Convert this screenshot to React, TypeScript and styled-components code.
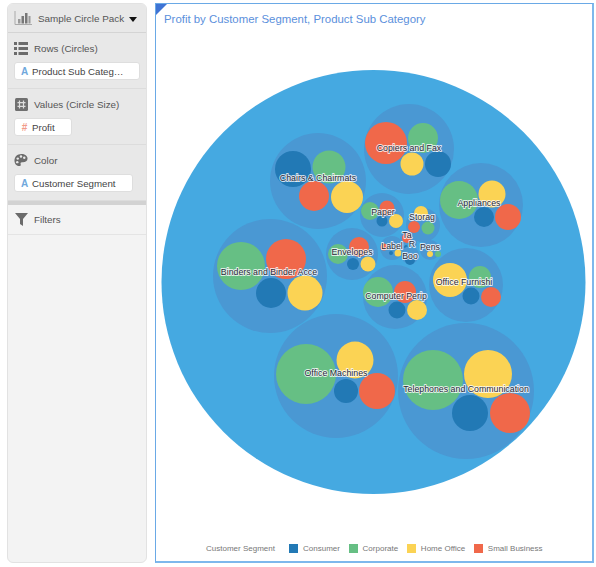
import React from "react";
import styled, { createGlobalStyle } from "styled-components";

const Global = createGlobalStyle`
  html, body { margin: 0; padding: 0; background: #fff; }
  body { font-family: "Liberation Sans", Arial, sans-serif; }
`;

const C = { dark: "#2279b5", green: "#66bf84", yellow: "#fbd354", red: "#f0684a" };

type Dot = [number, number, number, string];
type Group = { x: number; y: number; r: number; label: string; lx?: number; ly?: number; dots: Dot[] };

const groups: Group[] = [
  { x: 318, y: 181, r: 48, label: "Chairs & Chairmats", lx: 318, ly: 178, dots: [[293, 169, 18, C.dark], [329, 167, 16.5, C.green], [314, 196, 15, C.red], [347, 197, 16, C.yellow]] },
  { x: 409, y: 149, r: 45, label: "Copiers and Fax", lx: 409, ly: 148, dots: [[386, 143, 21, C.red], [423, 138, 15, C.green], [412, 164, 11.5, C.yellow], [438, 164, 13, C.dark]] },
  { x: 481, y: 205, r: 42, label: "Appliances", lx: 479, ly: 203, dots: [[459, 200, 19, C.green], [492, 194, 13.5, C.yellow], [484, 217, 10, C.dark], [508, 217, 13, C.red]] },
  { x: 382, y: 215, r: 22, label: "Paper", lx: 383, ly: 212, dots: [[370, 211, 9, C.green], [387, 208, 7.5, C.red], [382, 221, 5.5, C.dark], [396, 221, 7, C.yellow]] },
  { x: 423, y: 225, r: 17, label: "Storag", lx: 422, ly: 217, dots: [[421, 213, 7, C.yellow], [414, 227, 6, C.red], [428, 228, 6.5, C.green]] },
  { x: 352, y: 254, r: 26, label: "Envelopes", lx: 352, ly: 252, dots: [[338, 254, 10, C.green], [359, 247, 10, C.red], [353, 264, 6, C.dark], [368, 264, 7.5, C.yellow]] },
  { x: 407, y: 238, r: 7, label: "Ta", lx: 407, ly: 235, dots: [[407, 238, 5, C.red]] },
  { x: 392, y: 248, r: 12, label: "Label", lx: 392, ly: 246, dots: [[384, 247, 3.5, C.red], [391, 253, 2, C.dark], [398, 253, 3.5, C.yellow]] },
  { x: 413, y: 243, r: 4, label: "R", lx: 412, ly: 244, dots: [[406, 247, 2, C.dark]] },
  { x: 410, y: 255, r: 9, label: "Boo", lx: 410, ly: 256, dots: [[410, 260, 5, C.dark]] },
  { x: 430, y: 250, r: 10, label: "Pens", lx: 430, ly: 247, dots: [[430, 254, 3, C.yellow], [438, 254, 3, C.green]] },
  { x: 395, y: 297, r: 32, label: "Computer Perip", lx: 396, ly: 296, dots: [[378, 292, 15, C.green], [405, 292, 11, C.red], [397, 310, 8.5, C.dark], [417, 310, 10, C.yellow]] },
  { x: 466, y: 285, r: 37, label: "Office Furnishi", lx: 464, ly: 282, dots: [[450, 280, 17, C.yellow], [480, 277, 11, C.green], [471, 296, 8.5, C.dark], [491, 297, 10, C.red]] },
  { x: 270, y: 276, r: 57, label: "Binders and Binder Acce", lx: 269, ly: 272, dots: [[241, 266, 24, C.green], [286, 259, 20, C.red], [271, 293, 15, C.dark], [305, 293, 17.5, C.yellow]] },
  { x: 336, y: 376, r: 62, label: "Office Machines", lx: 336, ly: 373, dots: [[306, 374, 30, C.green], [355, 360, 18.5, C.yellow], [346, 391, 12, C.dark], [377, 391, 18, C.red]] },
  { x: 466, y: 391, r: 68, label: "Telephones and Communication", lx: 466, ly: 389, dots: [[433, 380, 30, C.green], [488, 374, 24, C.yellow], [470, 413, 18, C.dark], [510, 413, 20, C.red]] },
];

const Page = styled.div`
  width: 596px; height: 567px; box-sizing: border-box; padding: 3px 2px 4px 7px;
  display: flex; gap: 8px; overflow: hidden;
`;
const Side = styled.aside`
  width: 140px; flex: none; background: #f3f3f3; border: 1px solid #e2e2e2; border-radius: 6px;
  box-sizing: border-box; display: flex; flex-direction: column; overflow: hidden;
`;
const Header = styled.div`
  height: 29px; flex: none; box-sizing: border-box; background: #e8e8e8; border-bottom: 1px solid #d4d4d4;
  display: flex; align-items: center; padding-left: 6px; gap: 5px;
  font-size: 9.9px; color: #555;
`;
const Caret = styled.span`
  width: 0; height: 0; margin-top: 2px;
  border-left: 4px solid transparent; border-right: 4px solid transparent; border-top: 5px solid #111;
`;
const Section = styled.section`
  height: 56px; flex: none; box-sizing: border-box; background: #e8e8e8;
  border-bottom: 1px solid #dcdcdc; padding: 7px 6px 0 6px;
`;
const SectionTitle = styled.div`
  display: flex; align-items: center; gap: 6px; height: 16px; font-size: 9.8px; color: #555;
`;
const IconBox = styled.span`
  width: 14px; height: 14px; display: flex; align-items: center; justify-content: center; flex: none;
`;
const Pill = styled.div<{ $w: number }>`
  width: ${p => p.$w}px; height: 18px; box-sizing: border-box; margin-top: 6px;
  background: #fff; border: 1px solid #dedede; border-radius: 3px;
  display: flex; align-items: center; gap: 3px; padding-left: 5px;
  font-size: 9.7px; color: #444; white-space: nowrap;
`;
const TypeMark = styled.span<{ $c: string }>`
  color: ${p => p.$c}; font-weight: bold; font-size: 10px; width: 9px; text-align: center;
`;
const Divider = styled.div`
  height: 4px; flex: none; background: #d2d2d2;
`;
const Filters = styled.div`
  height: 30px; flex: none; box-sizing: border-box; border-bottom: 1px solid #e4e4e4;
  display: flex; align-items: center; gap: 6px; padding-left: 6px; font-size: 9.8px; color: #555;
`;
const Panel = styled.main`
  flex: 1; min-width: 0; position: relative; box-sizing: border-box;
  border-style: solid; border-width: 1px 2px 2px 1px;
  border-color: #6aa9e6 #7db8ec #7db8ec #6aa9e6;
  display: flex; flex-direction: column;
`;
const Corner = styled.span`
  position: absolute; left: 0; top: 0; width: 0; height: 0;
  border-top: 11px solid #3f74d4; border-right: 11px solid transparent;
`;
const Title = styled.h1`
  margin: 0; padding: 8px 0 0 8px; height: 22px; box-sizing: border-box;
  font-size: 11.4px; line-height: 14px; font-weight: normal; color: #5b90dc; flex: none;
`;
const Chart = styled.svg`
  display: block; flex: 1; min-height: 0; width: 100%;
`;
const Label = styled.text`
  font-family: "Liberation Sans", Arial, sans-serif; font-size: 8.8px; fill: #2a2a3a;
  stroke: #fff; stroke-opacity: .8; stroke-width: 1.8px; paint-order: stroke; stroke-linejoin: round; text-anchor: middle;
`;
const Legend = styled.div`
  height: 26px; flex: none; display: flex; align-items: center; padding: 0 0 0 50px; box-sizing: border-box;
  font-size: 8px; color: #777;
`;
const LegendTitle = styled.span`
  width: 83px; flex: none;
`;
const LegendItem = styled.span`
  display: flex; align-items: center; gap: 5px; margin-right: 8.7px; white-space: nowrap;
`;
const Swatch = styled.span<{ $c: string }>`
  width: 9px; height: 9px; background: ${p => p.$c}; flex: none;
`;

const BarsIcon = () => (
  <svg width="19" height="16" viewBox="0 0 19 16">
    <path d="M1 1v13.500h17" fill="none" stroke="#aaa" />
    <rect x="4" y="9" width="2.500" height="4.500" fill="#9a9a9a" />
    <rect x="7.500" y="6" width="2.500" height="7.500" fill="#777" />
    <rect x="11" y="3" width="2.500" height="10.500" fill="#777" />
    <rect x="14.500" y="6" width="2" height="7.500" fill="#9a9a9a" />
  </svg>
);
const ListIcon = () => (
  <svg width="14" height="13" viewBox="0 0 14 13" fill="#6b6b6b">
    <rect x="0" y="0" width="3" height="3" /><rect x="4.500" y="0" width="9.500" height="3" />
    <rect x="0" y="5" width="3" height="3" /><rect x="4.500" y="5" width="9.500" height="3" />
    <rect x="0" y="10" width="3" height="3" /><rect x="4.500" y="10" width="9.500" height="3" />
  </svg>
);
const HashIcon = () => (
  <svg width="13" height="13" viewBox="0 0 13 13">
    <rect width="13" height="13" rx="1.500" fill="#6f6f6f" />
    <path d="M4.500 2.500v8M8.500 2.500v8M2.500 4.700h8M2.500 8.300h8" stroke="#ddd" strokeWidth="1.200" />
  </svg>
);
const PaletteIcon = () => (
  <svg width="15" height="14" viewBox="0 0 15 14">
    <path d="M8 .5C3.500.5 .5 3.500.5 7.500s2.700 6 5 6c1.800 0 2-1.300 1.600-2.300-.4-1.200.3-2 1.600-1.900 3 .3 5.800-.9 5.800-4C14.500 2.500 11.500.5 8 .5z" fill="#6b6b6b" />
    <circle cx="4" cy="5.500" r="1.300" fill="#e8e8e8" />
    <circle cx="7.500" cy="3.300" r="1.300" fill="#e8e8e8" />
    <circle cx="11" cy="4.500" r="1.300" fill="#e8e8e8" />
    <circle cx="3.500" cy="9.300" r="1.300" fill="#e8e8e8" />
  </svg>
);
const FunnelIcon = () => (
  <svg width="13" height="13" viewBox="0 0 13 13">
    <path d="M0 0h13L8 6v7L5 11V6z" fill="#6b6b6b" />
  </svg>
);

export default function App() {
  return (
    <Page>
      <Global />
      <Side>
        <Header>
          <BarsIcon />
          <span>Sample Circle Pack</span>
          <Caret />
        </Header>
        <Section>
          <SectionTitle><IconBox><ListIcon /></IconBox>Rows (Circles)</SectionTitle>
          <Pill $w={126}><TypeMark $c="#6fa8dc">A</TypeMark>Product Sub Categ…</Pill>
        </Section>
        <Section>
          <SectionTitle><IconBox><HashIcon /></IconBox>Values (Circle Size)</SectionTitle>
          <Pill $w={58}><TypeMark $c="#f29b8a">#</TypeMark>Profit</Pill>
        </Section>
        <Section>
          <SectionTitle><IconBox><PaletteIcon /></IconBox>Color</SectionTitle>
          <Pill $w={119}><TypeMark $c="#6fa8dc">A</TypeMark>Customer Segment</Pill>
        </Section>
        <Divider />
        <Filters><IconBox><FunnelIcon /></IconBox>Filters</Filters>
      </Side>
      <Panel>
        <Corner />
        <Title>Profit by Customer Segment, Product Sub Category</Title>
        <Chart viewBox="156 26 436 509" preserveAspectRatio="xMinYMin meet">
          <circle cx={373.5} cy={282} r={212} fill="#45a9e1" />
          {groups.map(g => (
            <g key={g.label}>
              <circle cx={g.x} cy={g.y} r={g.r} fill="#4a98d3" />
              {g.dots.map((d, i) => <circle key={i} cx={d[0]} cy={d[1]} r={d[2]} fill={d[3]} />)}
            </g>
          ))}
          {groups.map(g => (
            <Label key={g.label} x={g.lx ?? g.x} y={(g.ly ?? g.y) + 3}>{g.label}</Label>
          ))}
        </Chart>
        <Legend>
          <LegendTitle>Customer Segment</LegendTitle>
          <LegendItem><Swatch $c={C.dark} />Consumer</LegendItem>
          <LegendItem><Swatch $c={C.green} />Corporate</LegendItem>
          <LegendItem><Swatch $c={C.yellow} />Home Office</LegendItem>
          <LegendItem><Swatch $c={C.red} />Small Business</LegendItem>
        </Legend>
      </Panel>
    </Page>
  );
}
